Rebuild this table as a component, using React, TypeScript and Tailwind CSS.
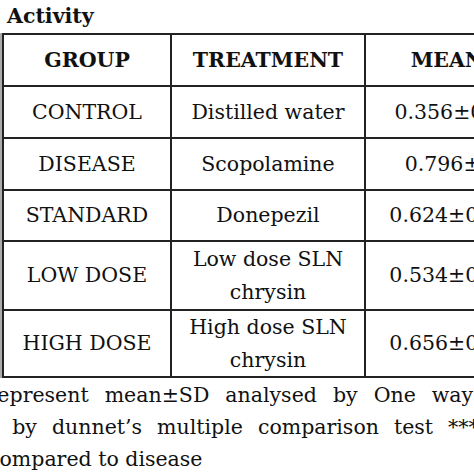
const rows = [
  { group: 'CONTROL', treatment: 'Distilled water', mean: '0.356±0.012**', h: 'h-[52px]' },
  { group: 'DISEASE', treatment: 'Scopolamine', mean: '0.796±0.018', h: 'h-[52px]' },
  { group: 'STANDARD', treatment: 'Donepezil', mean: '0.624±0.021***', h: 'h-[51px]' },
  { group: 'LOW DOSE', treatment: 'Low dose SLN chrysin', mean: '0.534±0.017***', h: 'h-[69px]' },
  { group: 'HIGH DOSE', treatment: 'High dose SLN chrysin', mean: '0.656±0.022***', h: 'h-[67px]' },
]

const cell = 'flex shrink-0 items-center justify-center border-r-2 border-b-2 border-[#222] px-2 text-center leading-[33px]'

export default function App() {
  return (
    <div className="h-[474px] w-[474px] overflow-hidden bg-white font-['DejaVu_Serif',serif] text-[20.5px] text-[#111]">
      <div className="mt-[2px] mb-[3px] pl-[7px] font-bold leading-[28px]">Activity</div>

      {/* Table */}
      <div className="flex">
        <div className="w-[2px] shrink-0 bg-[#aaa]" />
        <div className="w-[578px] shrink-0 border-t-2 border-l-2 border-[#222]">
          <div className="flex h-[52px] font-bold">
            <div className={`${cell} w-[168px]`}>GROUP</div>
            <div className={`${cell} w-[194px]`}>TREATMENT</div>
            <div className={`${cell} w-[214px] whitespace-nowrap`}>MEAN±SD</div>
          </div>
          {rows.map((r) => (
            <div key={r.group} className={`flex ${r.h}`}>
              <div className={`${cell} w-[168px]`}>{r.group}</div>
              <div className={`${cell} w-[194px]`}>{r.treatment}</div>
              <div className={`${cell} w-[214px] whitespace-nowrap`}>{r.mean}</div>
            </div>
          ))}
        </div>
      </div>

      {/* Footnote */}
      <div className="mt-[1px] whitespace-nowrap leading-[32px]">
        <div className="ml-[-96px] [word-spacing:9.5px]">
          Values represent mean±SD analysed by One way ANOVA
        </div>
        <div className="ml-[-91px] [word-spacing:8.5px]">
          followed by dunnet’s multiple comparison test *** p&lt;0.001
        </div>
        <div className="ml-[-12px]">compared to disease</div>
      </div>
    </div>
  )
}
